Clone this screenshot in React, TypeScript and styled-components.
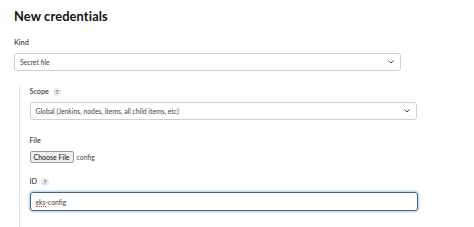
import React from "react";
import styled, { createGlobalStyle } from "styled-components";

const Global = createGlobalStyle`
  html, body { margin: 0; padding: 0; background: #ffffff; }
  body { font-family: Lato, "Noto Sans", sans-serif; color: #1f1f1f; }
  * { box-sizing: border-box; }
`;

const Page = styled.div`
  width: 474px;
  height: 227px;
  overflow: hidden;
  padding: 7px 0 0 14px;
  display: flex;
  flex-direction: column;
`;

const Title = styled.h1`
  margin: 0;
  font-size: 12.8px;
  line-height: 18px;
  font-weight: 700;
  color: #111;
  letter-spacing: 0.15px;
`;

const Field = styled.div<{ $top: number }>`
  display: flex;
  flex-direction: column;
  margin-top: ${(p) => p.$top}px;
`;

const Label = styled.div`
  display: flex;
  align-items: center;
  gap: 4px;
  font-size: 7.3px;
  line-height: 10px;
  font-weight: 400;
  color: #222;
  margin-bottom: 5px;
`;

const Help = styled.span`
  display: inline-flex;
  align-items: center;
  justify-content: center;
  width: 8px;
  height: 8px;
  border-radius: 50%;
  background: #e8e8e8;
  color: #555;
  font-size: 5.5px;
  font-weight: 700;
`;

const SelectBox = styled.div<{ $w: number }>`
  width: ${(p) => p.$w}px;
  height: 18px;
  border: 1px solid #cfcfcf;
  border-radius: 3px;
  background: #fff;
  display: flex;
  align-items: center;
  justify-content: space-between;
  padding: 0 6px 0 5px;
  font-size: 6.8px;
  color: #444;
`;

const Chevron = () => (
  <svg width="6" height="4" viewBox="0 0 6 4" fill="none">
    <path d="M0.8 0.8 L3 3 L5.2 0.8" stroke="#444" strokeWidth="1" strokeLinecap="round" strokeLinejoin="round" />
  </svg>
);

const Nested = styled.div`
  margin-left: 5px;
  margin-top: 15px;
  border-left: 1.5px solid #e2e2e2;
  padding-left: 9.5px;
  flex: 1;
  display: flex;
  flex-direction: column;
`;

const FileRow = styled.div`
  display: flex;
  align-items: center;
  gap: 3px;
  font-size: 6.8px;
  color: #444;
`;

const FileButton = styled.span`
  display: inline-flex;
  align-items: center;
  height: 12px;
  padding: 0 3px;
  background: #efefef;
  border: 1px solid #9a9a9a;
  border-radius: 2px;
  font-size: 7px;
  color: #111;
`;

const IdInput = styled.div`
  width: 388px;
  height: 19px;
  border: 1px solid #46647c;
  border-radius: 3px;
  box-shadow: 0 0 0 1.5px #c4ddf0;
  display: flex;
  align-items: center;
  padding: 0 5px;
  font-size: 6.8px;
  color: #444;
`;

const Misspelled = styled.span`
  border-bottom: 1px dotted #d33;
  padding-bottom: 0;
`;

export default function App() {
  return (
    <>
      <Global />
      <Page>
        <Title>New credentials</Title>
        <Field $top={13}>
          <Label>Kind</Label>
          <SelectBox $w={387}>
            <span>Secret file</span>
            <Chevron />
          </SelectBox>
        </Field>
        <Nested>
          <Field $top={1}>
            <Label>
              Scope <Help>?</Help>
            </Label>
            <SelectBox $w={387}>
              <span>Global (Jenkins, nodes, items, all child items, etc)</span>
              <Chevron />
            </SelectBox>
          </Field>
          <Field $top={16}>
            <Label>File</Label>
            <FileRow>
              <FileButton>Choose File</FileButton>
              <span>config</span>
            </FileRow>
          </Field>
          <Field $top={14}>
            <Label>
              ID <Help>?</Help>
            </Label>
            <IdInput>
              <span>
                <Misspelled>eks</Misspelled>-config
              </span>
            </IdInput>
          </Field>
        </Nested>
      </Page>
    </>
  );
}
